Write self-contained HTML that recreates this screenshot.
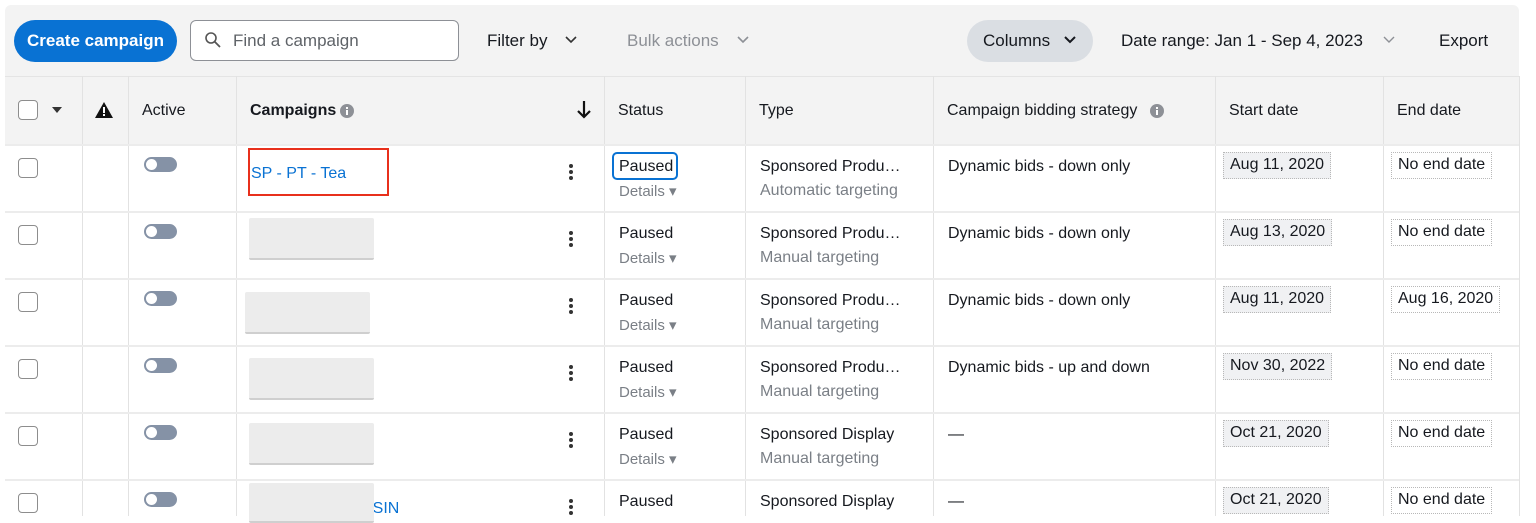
<!DOCTYPE html>
<html><head><meta charset="utf-8"><style>
*{margin:0;padding:0;box-sizing:border-box}
body{width:1536px;height:516px;overflow:hidden;background:#fff;font-family:"Liberation Sans",sans-serif;font-size:16px;color:#16191f;position:relative}
.a{position:absolute;white-space:nowrap}
.tb{position:absolute;left:5px;top:5px;width:1514px;height:71px;background:#f3f3f3;border-radius:6px 6px 0 0}
.hd{position:absolute;left:5px;top:76px;width:1514px;height:69px;background:#f3f3f3;border-top:1px solid #e4e4e4}
.vl{position:absolute;width:1px;background:#e2e2e2;top:76px;height:440px}
.hl{position:absolute;left:5px;width:1514px;height:2px;background:#ececec}
.cb{position:absolute;left:18px;width:20px;height:20px;border:1.5px solid #8d8d8d;border-radius:4px;background:#fff}
.tg{position:absolute;left:144px;width:33px;height:15px;border-radius:8px;background:#8592a6}
.tg:after{content:"";position:absolute;left:2px;top:2px;width:11px;height:11px;border-radius:50%;background:#fff}
.kb{position:absolute;left:569px;width:4px}
.kb i{display:block;width:4px;height:4px;border-radius:50%;background:#333;margin-bottom:2px}
.ph{position:absolute;width:125px;height:42px;background:#ececec;border-bottom:2px solid #cfcfcf;border-radius:2px}
.gr{color:#7a7f86}
.det{color:#7a7f86;font-size:15px}
.sd{position:absolute;left:1223px;height:27px;padding:3px 6px;border:1px dotted #b8b8b8;background:#f0f1f3}
.ed{position:absolute;left:1391px;height:27px;padding:3px 6px;border:1px dotted #b8b8b8;background:#fff}
.hdt{font-size:16px;color:#16191f}
</style></head><body>
<div class="tb"></div>
<div class="hd"></div>
<div class="a" style="left:14px;top:20px;width:163px;height:42px;border-radius:21px;background:#0972d3;color:#fff;font-size:17px;font-weight:bold;line-height:42px;text-align:center">Create campaign</div>
<div class="a" style="left:190px;top:20px;width:269px;height:41px;border:1.5px solid #8d9096;border-radius:6px;background:#fff"></div>
<svg class="a" style="left:204px;top:31px" width="18" height="18" viewBox="0 0 18 18"><circle cx="7" cy="7" r="5" fill="none" stroke="#555" stroke-width="1.6"/><path d="M11 11l5 5" stroke="#555" stroke-width="1.8"/></svg>
<div class="a gr" style="left:233px;top:31px;font-size:17px;color:#5f6368">Find a campaign</div>
<div class="a" style="left:487px;top:31px;font-size:17px">Filter by</div>
<svg class="a" style="left:565px;top:36px" width="12" height="8"><path d="M1 1l5 5 5-5" fill="none" stroke="#333" stroke-width="1.6"/></svg>
<div class="a" style="left:627px;top:31px;font-size:17px;color:#8d9096">Bulk actions</div>
<svg class="a" style="left:737px;top:36px" width="12" height="8"><path d="M1 1l5 5 5-5" fill="none" stroke="#8d9096" stroke-width="1.6"/></svg>
<div class="a" style="left:967px;top:20px;width:126px;height:42px;border-radius:21px;background:#dadee3"></div>
<div class="a" style="left:983px;top:31px;font-size:17px">Columns</div>
<svg class="a" style="left:1064px;top:36px" width="12" height="8"><path d="M1 1l5 5 5-5" fill="none" stroke="#16191f" stroke-width="2"/></svg>
<div class="a" style="left:1121px;top:31px;font-size:17px">Date range: Jan 1 - Sep 4, 2023</div>
<svg class="a" style="left:1383px;top:36px" width="12" height="8"><path d="M1 1l5 5 5-5" fill="none" stroke="#8d9096" stroke-width="1.4"/></svg>
<div class="a" style="left:1439px;top:31px;font-size:17px">Export</div>

<div class="vl" style="left:82px"></div><div class="vl" style="left:128px"></div><div class="vl" style="left:236px"></div><div class="vl" style="left:604px"></div><div class="vl" style="left:745px"></div><div class="vl" style="left:933px"></div><div class="vl" style="left:1215px"></div><div class="vl" style="left:1383px"></div><div class="vl" style="left:1519px"></div>
<div class="hl" style="top:144px"></div><div class="hl" style="top:211px"></div><div class="hl" style="top:278px"></div><div class="hl" style="top:345px"></div><div class="hl" style="top:412px"></div><div class="hl" style="top:479px"></div>

<div class="cb" style="top:100px"></div>
<svg class="a" style="left:52px;top:107px" width="10" height="6"><path d="M0 0h10L5 6z" fill="#333"/></svg>
<svg class="a" style="left:95px;top:102px" width="18" height="16"><path d="M9 0L18 16H0z" fill="#111"/><rect x="8" y="5" width="2" height="6" fill="#fff"/><rect x="8" y="12" width="2" height="2" fill="#fff"/></svg>
<div class="a hdt" style="left:142px;top:102px">Active</div>
<div class="a hdt" style="left:250px;top:102px;font-weight:bold">Campaigns</div>
<svg class="a" style="left:340px;top:104px" width="14" height="14"><circle cx="7" cy="7" r="7" fill="#8d9096"/><rect x="6" y="6" width="2" height="5" fill="#fff"/><rect x="6" y="3" width="2" height="2" fill="#fff"/></svg>
<svg class="a" style="left:577px;top:101px" width="14" height="18"><path d="M7 0v15M1 10l6 6 6-6" fill="none" stroke="#111" stroke-width="2.2"/></svg>
<div class="a hdt" style="left:618px;top:102px">Status</div>
<div class="a hdt" style="left:759px;top:102px">Type</div>
<div class="a hdt" style="left:947px;top:102px">Campaign bidding strategy</div>
<svg class="a" style="left:1150px;top:104px" width="14" height="14"><circle cx="7" cy="7" r="7" fill="#8d9096"/><rect x="6" y="6" width="2" height="5" fill="#fff"/><rect x="6" y="3" width="2" height="2" fill="#fff"/></svg>
<div class="a hdt" style="left:1229px;top:102px">Start date</div>
<div class="a hdt" style="left:1397px;top:102px">End date</div>

<!-- row1 -->
<div class="cb" style="top:158px"></div><div class="tg" style="top:157px"></div>
<div class="a" style="left:248px;top:148px;width:141px;height:48px;border:2px solid #e8301c"></div>
<div class="a" style="left:251px;top:165px;color:#0972d3">SP - PT - Tea</div>
<div class="kb" style="top:164px"><i></i><i></i><i></i></div>
<div class="a" style="left:612px;top:152px;width:66px;height:28px;border:2px solid #0972d3;border-radius:5px"></div>
<div class="a" style="left:619px;top:158px">Paused</div>
<div class="a det" style="left:619px;top:182px">Details ▾</div>
<div class="a" style="left:760px;top:158px">Sponsored Produ…</div>
<div class="a gr" style="left:760px;top:182px">Automatic targeting</div>
<div class="a" style="left:948px;top:158px">Dynamic bids - down only</div>
<div class="sd" style="top:152px">Aug 11, 2020</div><div class="ed" style="top:152px">No end date</div>
<!-- row2 -->
<div class="cb" style="top:225px"></div><div class="tg" style="top:224px"></div>
<div class="ph" style="left:249px;top:218px"></div>
<div class="kb" style="top:231px"><i></i><i></i><i></i></div>
<div class="a" style="left:619px;top:225px">Paused</div><div class="a det" style="left:619px;top:249px">Details ▾</div>
<div class="a" style="left:760px;top:225px">Sponsored Produ…</div><div class="a gr" style="left:760px;top:249px">Manual targeting</div>
<div class="a" style="left:948px;top:225px">Dynamic bids - down only</div>
<div class="sd" style="top:219px">Aug 13, 2020</div><div class="ed" style="top:219px">No end date</div>
<!-- row3 -->
<div class="cb" style="top:292px"></div><div class="tg" style="top:291px"></div>
<div class="ph" style="left:245px;top:292px"></div>
<div class="kb" style="top:298px"><i></i><i></i><i></i></div>
<div class="a" style="left:619px;top:292px">Paused</div><div class="a det" style="left:619px;top:316px">Details ▾</div>
<div class="a" style="left:760px;top:292px">Sponsored Produ…</div><div class="a gr" style="left:760px;top:316px">Manual targeting</div>
<div class="a" style="left:948px;top:292px">Dynamic bids - down only</div>
<div class="sd" style="top:286px">Aug 11, 2020</div><div class="ed" style="top:286px">Aug 16, 2020</div>
<!-- row4 -->
<div class="cb" style="top:359px"></div><div class="tg" style="top:358px"></div>
<div class="ph" style="left:249px;top:358px"></div>
<div class="kb" style="top:365px"><i></i><i></i><i></i></div>
<div class="a" style="left:619px;top:359px">Paused</div><div class="a det" style="left:619px;top:383px">Details ▾</div>
<div class="a" style="left:760px;top:359px">Sponsored Produ…</div><div class="a gr" style="left:760px;top:383px">Manual targeting</div>
<div class="a" style="left:948px;top:359px">Dynamic bids - up and down</div>
<div class="sd" style="top:353px">Nov 30, 2022</div><div class="ed" style="top:353px">No end date</div>
<!-- row5 -->
<div class="cb" style="top:426px"></div><div class="tg" style="top:425px"></div>
<div class="ph" style="left:249px;top:423px"></div>
<div class="kb" style="top:432px"><i></i><i></i><i></i></div>
<div class="a" style="left:619px;top:426px">Paused</div><div class="a det" style="left:619px;top:450px">Details ▾</div>
<div class="a" style="left:760px;top:426px">Sponsored Display</div><div class="a gr" style="left:760px;top:450px">Manual targeting</div>
<div class="a" style="left:948px;top:426px">—</div>
<div class="sd" style="top:420px">Oct 21, 2020</div><div class="ed" style="top:420px">No end date</div>
<!-- row6 -->
<div class="cb" style="top:493px"></div><div class="tg" style="top:492px"></div>
<div class="a" style="left:362px;top:500px;color:#0972d3">ASIN</div>
<div class="ph" style="left:249px;top:483px;height:40px"></div>
<div class="kb" style="top:499px"><i></i><i></i><i></i></div>
<div class="a" style="left:619px;top:493px">Paused</div>
<div class="a" style="left:760px;top:493px">Sponsored Display</div>
<div class="a" style="left:948px;top:493px">—</div>
<div class="sd" style="top:487px">Oct 21, 2020</div><div class="ed" style="top:487px">No end date</div>
</body></html>
